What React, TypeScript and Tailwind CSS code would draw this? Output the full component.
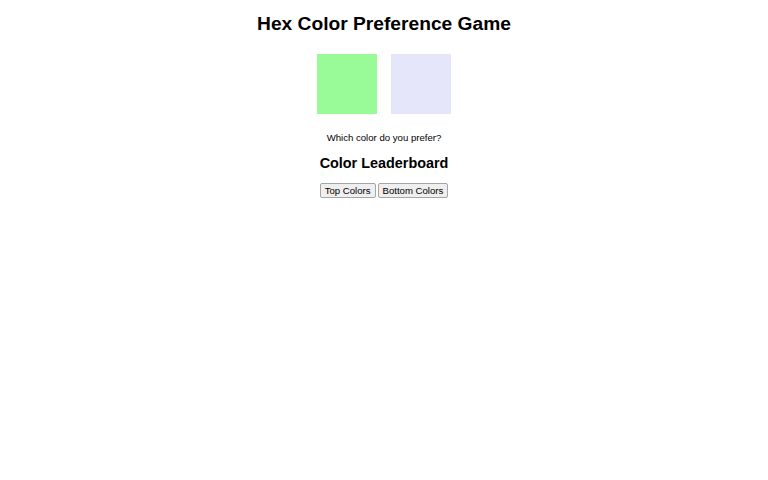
import React from "react";

const colors = ["#98FB98", "#E6E6FA"];

export default function App() {
  return (
    <div className="min-h-screen bg-white text-black font-['Liberation_Sans',Arial,sans-serif] flex flex-col items-center">
      <h1 className="mt-[13px] text-[19.2px] leading-[22px] font-bold">Hex Color Preference Game</h1>
      <div className="mt-[19px] flex gap-[14px]">
        {colors.map((c) => (
          <div key={c} className="w-[60px] h-[60px] cursor-pointer" style={{ backgroundColor: c }} />
        ))}
      </div>
      <p className="mt-[18px] text-[9.6px] leading-[11px]">Which color do you prefer?</p>
      <h2 className="mt-[12px] text-[14.4px] leading-[17px] font-bold">Color Leaderboard</h2>
      <div className="mt-[11px] flex gap-[2px]">
        <button className="h-[15px] px-[4px] text-[9.6px] leading-[13px] bg-[#efefef] border border-[#a6a6a6] rounded-[2px]">
          Top Colors
        </button>
        <button className="h-[15px] px-[4px] text-[9.6px] leading-[13px] bg-[#efefef] border border-[#a6a6a6] rounded-[2px]">
          Bottom Colors
        </button>
      </div>
    </div>
  );
}
